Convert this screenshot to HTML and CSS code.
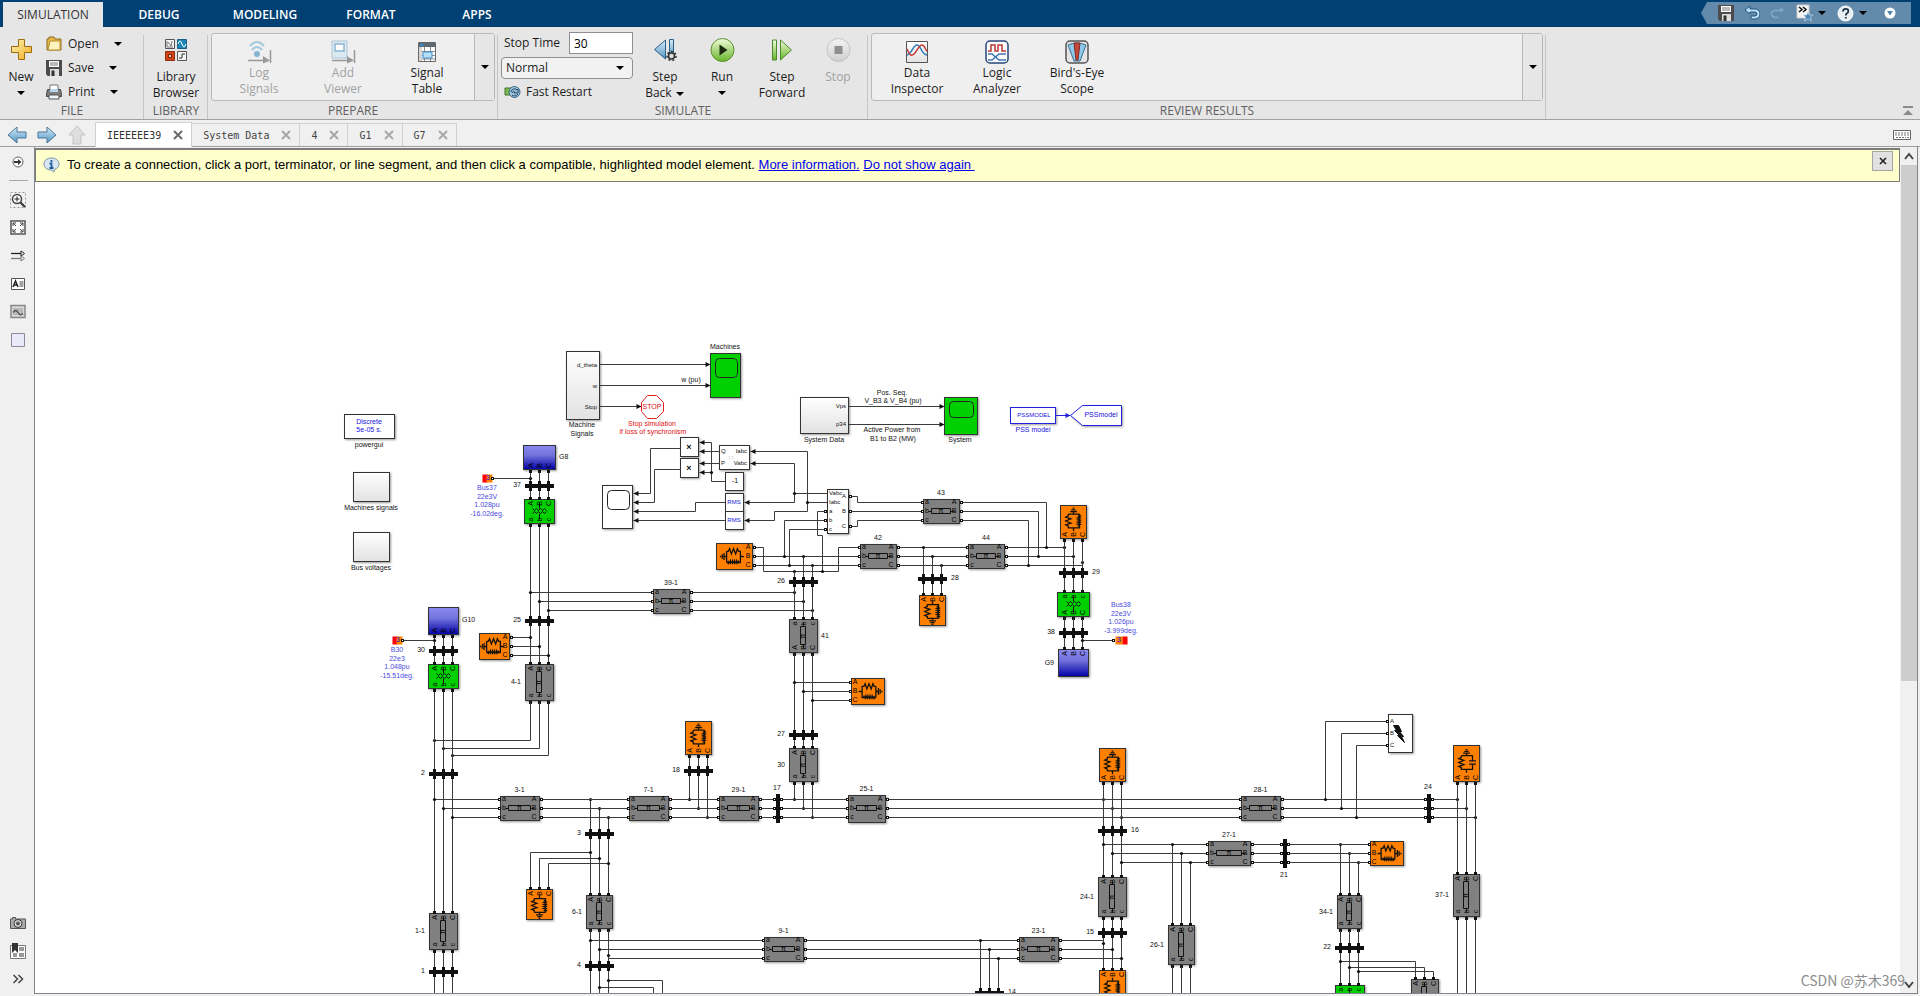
FILE: index.html
```html
<!DOCTYPE html>
<html lang="en">
<head>
<meta charset="utf-8">
<title>IEEEEEE39 - Simulink</title>
<link rel="stylesheet" href="styles.css">
</head>
<body>
<svg class="defs" aria-hidden="true">
  <defs>
    <linearGradient id="gold" x1="0" y1="0" x2="1" y2="1"><stop offset="0" stop-color="#fff6b8"/><stop offset="1" stop-color="#efa91c"/></linearGradient>
    <linearGradient id="sky" x1="0" y1="0" x2="0" y2="1"><stop offset="0" stop-color="#d8ecf8"/><stop offset="1" stop-color="#4f94c4"/></linearGradient>
    <linearGradient id="leaf" x1="0" y1="0" x2="0" y2="1"><stop offset="0" stop-color="#effbd9"/><stop offset="1" stop-color="#69b52a"/></linearGradient>
    <linearGradient id="mist" x1="0" y1="0" x2="0" y2="1"><stop offset="0" stop-color="#f4f4f4"/><stop offset="1" stop-color="#cfcfcf"/></linearGradient>
    <linearGradient id="gen" x1="0" y1="0" x2="0" y2="1"><stop offset="0" stop-color="#8888ee"/><stop offset="0.4" stop-color="#7373dc"/><stop offset="1" stop-color="#0000a8"/></linearGradient>
    <linearGradient id="sub" x1="0" y1="0" x2="0" y2="1"><stop offset="0" stop-color="#ffffff"/><stop offset="1" stop-color="#e2e2e2"/></linearGradient>
    <symbol id="caret" viewBox="0 0 10 6"><path d="M1 1h8L5 5z"/></symbol>
    <symbol id="cross" viewBox="0 0 10 10"><path d="M1 1l8 8M9 1l-8 8" fill="none" stroke="currentColor" stroke-width="2"/></symbol>
    <symbol id="disk" viewBox="0 0 16 16"><path d="M0 0h16v16H1.500L0 14z" fill="#4c4c4c"/><path d="M3 1h10v6H3z" fill="#fff"/><path d="M4 3h8M4 5h8" stroke="#777"/><path d="M4 9h9v7H4z" fill="#ddd"/><path d="M5.500 10.500h3V16h-3z" fill="#333"/></symbol>
  </defs>
</svg>

<header class="titlebar">
  <nav class="ribbon-tabs">
    <button class="ribbon-tab active">SIMULATION</button>
    <button class="ribbon-tab debug">DEBUG</button>
    <button class="ribbon-tab modeling">MODELING</button>
    <button class="ribbon-tab format">FORMAT</button>
    <button class="ribbon-tab apps">APPS</button>
  </nav>
  <div class="quick">
    <button class="quick-btn" aria-label="Save"><svg width="16" height="16"><use href="#disk"/></svg></button>
    <button class="quick-btn" aria-label="Undo"><svg width="16" height="16"><path d="M1 5l5-4v3h5a4 4 0 0 1 0 10H7v-3h4a1.500 1.500 0 0 0 0-4H6v2z" fill="#bfe0f5" stroke="#1f5580"/></svg></button>
    <button class="quick-btn" aria-label="Redo"><svg width="16" height="16"><path d="M15 5l-5-4v3H5a4 4 0 0 0 0 10h4v-3H5a1.500 1.500 0 0 1 0-4h5v2z" fill="#7fa4c2" stroke="#5e86a8"/></svg></button>
    <button class="quick-btn wide" aria-label="Favorites"><svg width="17" height="18"><path d="M1 1h12v13H1z" fill="#f4f4f4" stroke="#ccc"/><path d="M3 3l3 2.500L3 8M7 3l3 2.500L7 8" fill="none" stroke="#111" stroke-width="1.500"/><path d="M12 8l1.300 3H17l-2.600 2 1 4-3.400-2.200L8.600 17l1-4L7 11h3.700z" fill="#4b86b8" stroke="#d7e7f3" stroke-width="0.600"/></svg><svg width="10" height="6"><use href="#caret"/></svg></button>
    <button class="quick-btn wide" aria-label="Help"><svg width="17" height="17"><circle cx="8.500" cy="8.500" r="7.500" fill="#e9eef2" stroke="#fff"/><path d="M6 6.500q0-2.700 2.700-2.700T11.300 6.300q0 1.500-1.500 2.200-1 .5-1 2M8.800 12v1.600" fill="none" stroke="#1b2f45" stroke-width="1.800"/></svg><svg width="10" height="6"><use href="#caret"/></svg></button>
    <button class="quick-btn last" aria-label="More"><svg width="12" height="12"><circle cx="6" cy="6" r="5.500" fill="#fff"/><path d="M3 4h6L6 8.500z" fill="#4f83ad"/></svg></button>
  </div>
</header>

<section class="ribbon">
  <div class="group file">
    <div class="group-body">
      <button class="big new"><svg width="24" height="24"><path d="M9.500 1.500h6v7h7v6h-7v7h-6v-7h-7v-6h7z" fill="url(#gold)" stroke="#9c6c0c"/></svg><span>New</span><svg class="under" width="10" height="6"><use href="#caret"/></svg></button>
      <div class="stack">
        <button class="row"><svg width="16" height="16"><path d="M1 3h2V1h5l1 2h6v11H1z" fill="#e5b94a" stroke="#8d6a1c"/><path d="M4 5h10v9H2z" fill="#fff3bd" stroke="#b88f30"/></svg><span>Open</span><svg width="10" height="6"><use href="#caret"/></svg></button>
        <button class="row"><svg width="16" height="16"><use href="#disk"/></svg><span>Save</span><svg width="10" height="6"><use href="#caret"/></svg></button>
        <button class="row"><svg width="16" height="16"><path d="M4 1h8v6H4z" fill="#fff" stroke="#777"/><path d="M1.500 5.500h13q1 3 1 7h-15q0-4 1-7z" fill="#7d7d7d" stroke="#444"/><path d="M4 5h8v3H4z" fill="#b5d7ee"/><path d="M3 11h10v4H3z" fill="#eef6fc" stroke="#555"/></svg><span>Print</span><svg width="10" height="6"><use href="#caret"/></svg></button>
      </div>
    </div>
    <h2>FILE</h2>
  </div>
  <div class="group library">
    <div class="group-body">
      <button class="big"><svg width="24" height="24"><path d="M1.500 1.500h9v9h-9z" fill="#f4f4f4" stroke="#555"/><path d="M3 3v6h6M4 4l3 4 1-5" fill="none" stroke="#777"/><path d="M13.500 1.500h9v9h-9z" fill="#1e86b8" stroke="#146088"/><path d="M14 6q2-6 4 0t4 0" fill="none" stroke="#fff"/><path d="M1.500 13.500h9v9h-9z" fill="#d2431a" stroke="#8e2c0e"/><path d="M4.500 16.500h3v3h-3z" fill="#f7c9b5" stroke="#7c2306"/><path d="M13.500 13.500h9v9h-9z" fill="#f4f4f4" stroke="#555"/><path d="M15 20h3v-4h3" fill="none" stroke="#333"/></svg><span>Library<br>Browser</span></button>
    </div>
    <h2>LIBRARY</h2>
  </div>
  <div class="group prepare">
    <div class="group-body">
      <div class="gallery">
        <button class="item" disabled><svg width="26" height="24"><path d="M4 6q7-8 14 0M6 10q5-6 10 0" fill="none" stroke="#a5c8dd" stroke-width="2"/><circle cx="11" cy="14" r="3" fill="#86b3d0"/><path d="M2 20.500h18M24.500 10v13" stroke="#999" stroke-width="1.500"/><path d="M17 16l7 4.500-7 3z" fill="#999"/></svg><span>Log<br>Signals</span></button>
        <button class="item" disabled><svg width="26" height="24"><path d="M2 1h15v17H2z" fill="#dbe9f1" stroke="#a9c5d6"/><path d="M5 4h9v7H5z" fill="#fff" stroke="#8db5cf" stroke-width="1.500"/><path d="M2 20.500h18M24.500 10v13" stroke="#999" stroke-width="1.500"/><path d="M17 16l7 4.500-7 3z" fill="#999"/></svg><span>Add<br>Viewer</span></button>
        <button class="item"><svg width="24" height="24"><path d="M3.500 2.500h17v19h-17z" fill="#fff" stroke="#666"/><path d="M4 3h16v4H4z" fill="#5c6a75"/><path d="M3.500 11.500h17M3.500 15.500h17M3.500 19h17M9.500 7v14M15.500 7v14" stroke="#8a8a8a"/><path d="M4 7h3v14H4z" fill="#d5d5d5"/><path d="M8 12h9v6H8z" fill="#b9defa" stroke="#3f8fd0"/><path d="M5 4h3v2H5z" fill="#2a8fe0"/></svg><span>Signal<br>Table</span></button>
        <button class="more" aria-label="More prepare tools"><svg width="10" height="6"><use href="#caret"/></svg></button>
      </div>
    </div>
    <h2>PREPARE</h2>
  </div>
  <div class="group simulate">
    <div class="group-body">
      <div class="sim-fields">
        <div class="stop-time"><label for="stop">Stop Time</label><input id="stop" type="text" value="30"></div>
        <div class="mode"><select aria-label="Simulation mode"><option>Normal</option></select><svg width="10" height="6"><use href="#caret"/></svg></div>
        <button class="fast"><svg width="17" height="14"><path d="M1 3h6v7H1z" fill="#7cb94a" stroke="#40702a"/><circle cx="10.500" cy="7" r="5.500" fill="#9cc3dd" stroke="#3c6888"/><path d="M7 7a3.500 3.500 0 0 1 6-2l1-1v4h-4l1-1a2 2 0 0 0-3 1M14 9a4 4 0 0 1-6 1" fill="none" stroke="#1f4965"/></svg><span>Fast Restart</span></button>
      </div>
      <button class="big back"><svg width="24" height="24"><path d="M12.500 2v19L1.500 11.500z" fill="url(#sky)" stroke="#2c5f88"/><path d="M16.500 1.500h4v18h-4z" fill="url(#sky)" stroke="#2c5f88"/><circle cx="18.500" cy="18" r="3" fill="#ddd" stroke="#333" stroke-width="1.500"/><circle cx="18.500" cy="18" r="4.500" fill="none" stroke="#333" stroke-width="1.500" stroke-dasharray="2 2"/></svg><span>Step<br>Back <svg width="10" height="6"><use href="#caret"/></svg></span></button>
      <button class="big run"><svg width="25" height="24"><circle cx="12.500" cy="12" r="11.500" fill="url(#leaf)" stroke="#5f8f30"/><path d="M9.500 6.500v11l8-5.500z" fill="#1c2a12"/></svg><span>Run</span><svg class="under" width="10" height="6"><use href="#caret"/></svg></button>
      <button class="big fwd"><svg width="24" height="24"><path d="M2.500 2h4v20h-4z" fill="url(#leaf)" stroke="#4b8a2c"/><path d="M10.500 2v20l11-10z" fill="url(#leaf)" stroke="#4b8a2c"/></svg><span>Step<br>Forward</span></button>
      <button class="big stop" disabled><svg width="25" height="24"><circle cx="12.500" cy="12" r="11.500" fill="url(#mist)" stroke="#c2c2c2"/><path d="M8.500 8h8v8h-8z" fill="#8f8f8f"/></svg><span>Stop</span></button>
    </div>
    <h2>SIMULATE</h2>
  </div>
  <div class="group review">
    <div class="group-body">
      <div class="gallery">
        <button class="item"><svg width="24" height="24"><path d="M1.500 1.500h21v21h-21z" fill="url(#sub)" stroke="#555"/><path d="M2 15C7 14 8 5 12 5s4 9 10 10" fill="none" stroke="#2f7fc0" stroke-width="1.500"/><path d="M2 9c2 5 4 8 7 5s5-9 8-9 3 5 5 6" fill="none" stroke="#c73a33" stroke-width="1.500"/></svg><span>Data<br>Inspector</span></button>
        <button class="item"><svg width="24" height="24"><rect x="1" y="1" width="22" height="22" rx="4" fill="#fff" stroke="#28457c" stroke-width="1.500"/><path d="M3 11h3V5h4v6h3V5h4v6h4" fill="none" stroke="#b93a33" stroke-width="1.500"/><path d="M3 14h4l7 6h7M3 20h4l7-6h7" fill="none" stroke="#3e77b8" stroke-width="1.500"/></svg><span>Logic<br>Analyzer</span></button>
        <button class="item"><svg width="24" height="24"><rect x="1" y="1" width="22" height="22" rx="4" fill="#e4e4e4" stroke="#555" stroke-width="1.500"/><path d="M3 5q9-4 18 0l-6 16H9z" fill="#8ec9ea" stroke="#3a6d8e"/><path d="M9 3h6l-2 17h-2z" fill="#c7473a" stroke="#7e2a22"/></svg><span>Bird's-Eye<br>Scope</span></button>
        <button class="more" aria-label="More review tools"><svg width="10" height="6"><use href="#caret"/></svg></button>
      </div>
    </div>
    <h2>REVIEW RESULTS</h2>
  </div>
  <button class="collapse" aria-label="Collapse toolstrip"><svg width="12" height="12"><path d="M1 1h10v2H1zM6 5l5 5H1z" fill="#8a8a8a"/></svg></button>
</section>

<nav class="docbar">
  <button class="nav-btn" aria-label="Back"><svg width="20" height="18"><path d="M1 9l9-8v5h9v6h-9v5z" fill="url(#sky)" stroke="#4a7696"/></svg></button>
  <button class="nav-btn" aria-label="Forward"><svg width="20" height="18"><path d="M19 9l-9-8v5H1v6h9v5z" fill="url(#sky)" stroke="#4a7696"/></svg></button>
  <button class="nav-btn up" aria-label="Up"><svg width="18" height="20"><path d="M9 1l8 9h-4v9H5v-9H1z" fill="#dedede" stroke="#c4c4c4"/></svg></button>
  <div class="doctabs">
    <button class="doctab current"><span>IEEEEEE39</span><svg width="10" height="10"><use href="#cross"/></svg></button>
    <button class="doctab"><span>System Data</span><svg width="10" height="10"><use href="#cross"/></svg></button>
    <button class="doctab"><span>4</span><svg width="10" height="10"><use href="#cross"/></svg></button>
    <button class="doctab"><span>G1</span><svg width="10" height="10"><use href="#cross"/></svg></button>
    <button class="doctab"><span>G7</span><svg width="10" height="10"><use href="#cross"/></svg></button>
  </div>
  <button class="keyboard" aria-label="Keyboard shortcuts"><svg width="18" height="10"><path d="M0.500 0.500h17v9h-17z" fill="#fff" stroke="#666"/><path d="M2 3h14M2 5h14M3 7.500h2M6 7.500h7M14 7.500h2" stroke="#777" stroke-dasharray="2 1"/></svg></button>
</nav>

<main class="workspace">
  <aside class="palette">
    <button aria-label="Hide browser"><svg width="16" height="16"><circle cx="8" cy="8" r="5" fill="#fff" stroke="#666"/><path d="M4 7h4V5l3.500 3L8 11V9H4z" fill="#333"/></svg></button>
    <hr>
    <button aria-label="Zoom"><svg width="16" height="16"><path d="M.5.500h15v15H.5z" fill="none" stroke="#999" stroke-dasharray="2 2"/><circle cx="7" cy="7" r="4.500" fill="#fff" stroke="#444" stroke-width="1.500"/><path d="M4.500 7h5M7 4.500v5" stroke="#222"/><path d="M10.500 10.500l4.500 4.500" stroke="#333" stroke-width="2"/></svg></button>
    <button aria-label="Fit to view"><svg width="16" height="16"><path d="M1 1h14v13H1z" fill="#fff" stroke="#555" stroke-width="1.500"/><path d="M3 6V3h3M10 3h3v3M3 9v3h3M13 9v3h-3M3 3l3 3M13 3l-3 3M3 12l3-3M13 12l-3-3" fill="none" stroke="#444"/></svg></button>
    <button aria-label="Signals"><svg width="16" height="16"><path d="M1 5.500h12" stroke="#222" stroke-width="1.300"/><path d="M11 3l3.500 2.500L11 8z" fill="#fff" stroke="#222"/><path d="M1 10.500h12" stroke="#777" stroke-width="1.300"/><path d="M11 8l3.500 2.500L11 13z" fill="#fff" stroke="#777"/></svg></button>
    <button aria-label="Annotation"><svg width="16" height="16"><path d="M1.500 2.500h13v11h-13z" fill="#fff" stroke="#555"/><path d="M3 11l2.500-6L8 11M4 9h3" fill="none" stroke="#222" stroke-width="1.500"/><path d="M9.500 6h4M9.500 8h4M9.500 10h4" stroke="#444"/></svg></button>
    <button aria-label="Image"><svg width="16" height="16"><path d="M1 1.500h14v12H1z" fill="#d9d9d9" stroke="#888" stroke-width="1.500"/><path d="M3 4h10v7H3z" fill="#b8b8b8"/><path d="M3 8.500q3-4 5 0t5 1" fill="none" stroke="#555" stroke-width="1.300"/></svg></button>
    <button aria-label="Area"><svg width="16" height="16"><path d="M1.500 1.500h13v13h-13z" fill="#e9e9f8" stroke="#8a8a99"/></svg></button>
    <span class="spring"></span>
    <button aria-label="Screenshot"><svg width="16" height="16"><path d="M.5 4h2V2.500h3V4h10v9.500H.5z" fill="#aaa" stroke="#555"/><circle cx="8" cy="8.500" r="4" fill="#ddd" stroke="#333"/><circle cx="8" cy="8.500" r="2" fill="#555"/></svg></button>
    <button aria-label="Model browser"><svg width="16" height="16"><path d="M.5 2.500h15v13H.5z" fill="#fff" stroke="#777"/><path d="M9 4h5v4H9zM3 10h4v4H3zM9 10h5v4H9z" fill="#999"/><path d="M2 0h6v10L5 7l-3 3z" fill="#333"/></svg></button>
    <button aria-label="More tools"><svg width="16" height="16"><path d="M3.500 4l4 4-4 4M8.500 4l4 4-4 4" fill="none" stroke="#444" stroke-width="1.500"/></svg></button>
  </aside>
  <div class="editor">
    <div class="notice">
      <svg width="18" height="16"><path d="M8.500 1C4 1 1 3.500 1 7s3 6 7 6l3 2 .5-2.500C14.500 11.500 16 9.500 16 7c0-3.500-3-6-7.500-6z" fill="#d7e6f0" stroke="#7d94a5"/><path d="M8.500 3v2M6.500 6.500h2V11M6.500 11h4" fill="none" stroke="#1e5c9a" stroke-width="1.800"/></svg>
      <p>To create a connection, click a port, terminator, or line segment, and then click a compatible, highlighted model element. <a href="#info">More information.</a> <a href="#hide">Do not show again&nbsp;</a></p>
      <button class="dismiss" aria-label="Dismiss"><svg width="8" height="8"><path d="M1 1l6 6M7 1L1 7" stroke="#222" stroke-width="1.600"/></svg></button>
    </div>
    <svg class="canvas" id="model" role="img" aria-label="Block diagram"></svg>
  </div>
  <div class="scrollbar">
    <svg width="16" height="18"><path d="M4 12l4-5 4 5" fill="none" stroke="#444" stroke-width="2"/></svg>
    <div class="thumb"></div>
    <svg class="down" width="16" height="17"><path d="M4 6l4 5 4-5" fill="none" stroke="#444" stroke-width="2"/></svg>
  </div>
</main>
<div class="watermark">CSDN @苏木369</div>
<script src="diagram.js"></script>
</body>
</html>
```

FILE: styles.css
```css
* { box-sizing: border-box; }
html, body { height: 100%; }
body {
  margin: 0;
  display: flex;
  flex-direction: column;
  background: #f0f0f0;
  color: #1c1c1c;
  font: 12px/16px "Open Sans", "Noto Sans", sans-serif;
  overflow: hidden;
}
button {
  padding: 0;
  border: 0;
  background: none;
  color: inherit;
  font: inherit;
}
svg { display: block; flex: none; }
.defs { position: absolute; width: 0; height: 0; }

.titlebar {
  display: flex;
  justify-content: space-between;
  height: 27px;
  padding-left: 3px;
  background: #004073;
}
.ribbon-tabs { display: flex; padding-top: 2px; }
.ribbon-tab { color: #fff; font-weight: 600; }
.ribbon-tab.active { width: 100px; background: #e6e6e6; color: #333; font-weight: 400; }
.ribbon-tab.debug { width: 112px; }
.ribbon-tab.modeling { width: 100px; }
.ribbon-tab.format { width: 112px; }
.ribbon-tab.apps { width: 100px; }
.quick {
  display: flex;
  align-items: center;
  gap: 10px;
  width: 210px;
  height: 22px;
  margin: 2px 9px 0 0;
  padding-left: 17px;
  background: #6389ab;
  clip-path: polygon(6px 0, 100% 0, 100% 100%, 6px 100%, 0 50%);
}
.quick-btn.wide { display: flex; align-items: center; gap: 4px; }
.quick-btn.last { margin-left: 6px; }

.ribbon {
  display: flex;
  background: #e6e6e6;
  border-bottom: 1px solid #a0a0a0;
}
.group {
  position: relative;
  display: flex;
  flex-direction: column;
  padding-top: 5px;
}
.group::after {
  content: "";
  position: absolute;
  top: 8px;
  right: 0;
  bottom: 0;
  border-right: 1px solid #c6c6c6;
}
.group h2 {
  margin: 0;
  padding-top: 2px;
  color: #606060;
  font-size: 12px;
  font-weight: 400;
  line-height: 16px;
  text-align: center;
}
.group-body { display: flex; height: 69px; }
.file { width: 144px; }
.library { width: 64px; }
.library .big { flex: 1; }
.prepare { width: 290px; }
.simulate { width: 370px; }
.review { flex: 0 1 678px; }

.big {
  display: flex;
  flex-direction: column;
  align-items: center;
  padding-top: 6px;
}
.big > span { margin-top: 7px; }
.big span svg { display: inline-block; vertical-align: middle; }
.under { margin-top: 5px; }
.new { width: 42px; }
.stack { padding-left: 4px; }
.row { display: flex; align-items: center; height: 24px; }
.row span { margin: 0 14px 0 6px; }
button:disabled { color: #a2a2a2; }

.gallery {
  display: flex;
  flex: 1;
  margin: 1px 3px 0;
  border: 1px solid #b9b9b9;
  border-radius: 3px;
  background: #efefef;
}
.item {
  display: flex;
  flex-direction: column;
  align-items: center;
  gap: 1px;
  width: 84px;
  padding-top: 6px;
}
.prepare .item:first-child { margin-left: 5px; }
.review .item { width: 80px; }
.review .item:first-child { margin-left: 5px; }
.more {
  display: flex;
  align-items: center;
  justify-content: center;
  width: 20px;
  margin-left: auto;
  border-left: 1px solid #b9b9b9;
  background: #e6e6e6;
}

.sim-fields {
  display: flex;
  flex-direction: column;
  gap: 3px;
  width: 132px;
  margin: 0 5px 0 3px;
}
.stop-time { display: flex; align-items: center; justify-content: space-between; padding-left: 3px; }
.stop-time input {
  width: 64px;
  height: 22px;
  border: 1px solid #8f8f8f;
  padding: 0 4px;
  font: inherit;
  background: #fff;
}
.mode { position: relative; }
.mode select {
  appearance: none;
  display: block;
  width: 100%;
  height: 22px;
  padding: 0 4px;
  border: 1px solid #8f8f8f;
  border-radius: 4px;
  background: #f2f2f2;
  font: inherit;
  color: inherit;
}
.mode svg { position: absolute; right: 8px; top: 8px; pointer-events: none; }
.fast { display: flex; align-items: center; gap: 5px; height: 21px; padding-left: 3px; }
.back { width: 54px; }
.run { width: 60px; }
.fwd { width: 60px; }
.stop { width: 52px; }
.collapse { margin: auto 6px 2px auto; }

.docbar {
  display: flex;
  align-items: center;
  gap: 10px;
  height: 27px;
  padding: 3px 9px 0 7px;
  border-bottom: 1px solid #a0a0a0;
}
.nav-btn { width: 20px; display: flex; justify-content: center; }
.doctabs { display: flex; align-items: flex-end; align-self: stretch; margin: -1px 0 -1px -2px; }
.doctab {
  display: flex;
  align-items: center;
  gap: 12px;
  height: 23px;
  margin-bottom: 1px;
  padding: 0 8px 0 11px;
  border: 1px solid #d0d0d0;
  border-left: 0;
  border-bottom: 0;
  font: 10px/16px "DejaVu Sans Mono", monospace;
  color: #444;
}
.doctab span { padding-top: 2px; }
.doctab svg { color: #a8a8a8; }
.doctab.current {
  height: 25px;
  margin: 0;
  background: #fff;
  border-left: 1px solid #d0d0d0;
  color: #333;
}
.doctab.current svg { color: #6a6a6a; }
.keyboard { margin-left: auto; }

.workspace {
  flex: 1;
  min-height: 0;
  display: flex;
  padding: 0 2px 2px 0;
}
.palette {
  display: flex;
  flex-direction: column;
  align-items: center;
  gap: 12px;
  width: 34px;
  padding: 7px 0 7px 2px;
}
.palette hr { width: 19px; margin: -2px 0 -1px; border: 0; border-top: 1px solid #a8a8a8; }
.spring { flex: 1; }
.editor {
  flex: 1;
  min-width: 0;
  display: flex;
  flex-direction: column;
  padding-top: 1px;
  border-left: 1px solid #80868f;
  border-bottom: 1px solid #80868f;
}
.notice {
  display: flex;
  align-items: center;
  gap: 6px;
  height: 34px;
  padding: 0 6px 1px 7px;
  border: 1px solid #7b7b7b;
  border-top-width: 2px;
  background: #ffffcc;
  font: 13px/16px "Liberation Sans", Arial, sans-serif;
}
.notice p { margin: 0; color: #000; }
.notice a { color: #0000ee; }
.dismiss {
  display: flex;
  align-items: center;
  justify-content: center;
  align-self: flex-start;
  width: 21px;
  height: 20px;
  margin: 1px 0 0 auto;
  border: 1px solid #a5a5a5;
  background: #e1e1e1;
}
.canvas { flex: 1; min-height: 0; width: 100%; background: #fff; overflow: hidden; }
.scrollbar {
  display: flex;
  flex-direction: column;
  width: 18px;
  padding-left: 1px;
  border-right: 1px solid #80868f;
  border-bottom: 1px solid #80868f;
}
.thumb { height: 61%; background: #cdcdcd; }
.scrollbar .down { margin-top: auto; }
.watermark {
  position: absolute;
  right: 15px;
  bottom: 6px;
  color: #8c8c8c;
  font: 14px/20px "Noto Sans CJK SC", sans-serif;
}

.canvas text { font: 7px "Liberation Sans", Arial, sans-serif; fill: #111; }
.canvas .port-name { font-size: 6px; fill: #111; }
.canvas .pin { font-size: 7px; fill: #000; }
.canvas .blue { fill: #1414dd; }
.canvas .bus-info { fill: #4a4ae0; }
.canvas .red { fill: #e01010; }
.canvas .times { font-size: 9px; font-weight: 700; }
.wire { fill: none; stroke: #3c3c3c; stroke-width: 1; }
.wire.blue { fill: none; stroke: #2222dd; }
.box { stroke: #333; stroke-width: 1; filter: drop-shadow(1px 1px 1px #0006); }
.glyph { fill: none; stroke: #111; stroke-width: 1; }
.glyph.strong { stroke-width: 1.5; }
.knob { fill: #fff; stroke: #111; stroke-width: 1; }
.dot, .bar, .tip { fill: #111; }
.tip.blue { fill: #2222dd; }
```

FILE: diagram.js
```js
(function () {
  var NS = "http://www.w3.org/2000/svg";
  var root = document.getElementById("model");
  var P = 9; // spacing between the three phases

  function el(name, attrs, parent) {
    var e = document.createElementNS(NS, name);
    for (var k in attrs) e.setAttribute(k, attrs[k]);
    (parent || layer).appendChild(e);
    return e;
  }
  var layer = el("g", { transform: "translate(-34.5 -181.5)" }, root);

  function text(x, y, s, anchor, cls, rot) {
    var a = { x: rot ? x : x - 0.5, y: rot ? y + 2 : y + 1.5, "text-anchor": anchor || "middle" };
    if (cls) a["class"] = cls;
    if (rot) a.transform = "rotate(-90 " + x + " " + y + ")";
    el("text", a).textContent = s;
  }
  function wire(pts, cls) {
    el("polyline", { points: pts, "class": "wire " + (cls || "") });
  }
  function arrow(pts, cls) {
    wire(pts, cls);
    var n = pts.split(" "), x = +n[n.length - 2], y = +n[n.length - 1];
    var d = x > +n[n.length - 4] ? -5 : 5;
    el("path", { d: "M" + x + " " + y + "l" + d + " -2.500v5z", "class": "tip " + (cls || "") });
  }
  function dots() {
    for (var i = 0; i < arguments.length; i += 2)
      el("circle", { cx: arguments[i], cy: arguments[i + 1], r: 1.6, "class": "dot" });
  }
  function box(x, y, w, h, fill, extra) {
    var a = { x: x, y: y, width: w, height: h, fill: fill, "class": "box" };
    for (var k in extra) a[k] = extra[k];
    el("rect", a);
  }
  function knob(x, y) { el("rect", { x: x - 1, y: y - 1, width: 2, height: 2, "class": "knob" }); }
  function knobsV(x, y) { for (var i = 0; i < 3; i++) el("rect", { x: x + i * P - 1.5, y: y - 1.5, width: 3, height: 3, "class": "bar" }); }
  function knobsH(x, y) { for (var i = 0; i < 3; i++) knob(x, y + i * P); }
  function cols(x, y1, y2) { for (var i = 0; i < 3; i++) wire((x + i * P) + " " + y1 + " " + (x + i * P) + " " + y2); }
  function rows(x1, x2, y) { for (var i = 0; i < 3; i++) wire(x1 + " " + (y + i * P) + " " + x2 + " " + (y + i * P)); }
  function pinsV(x, y, s) { for (var i = 0; i < 3; i++) text(x + i * P, y, s[i], "middle", "pin", true); }
  function pinsH(x, y, s) { for (var i = 0; i < 3; i++) text(x, y + i * P, s[i], "middle", "pin"); }

  // Bus bar across three vertical phases
  function bus(x, y, label, side) {
    el("rect", { x: x - 5.5, y: y - 1.5, width: 29, height: 4, "class": "bar" });
    knobsV(x, y - 3); knobsV(x, y + 4);
    if (side === "r") text(x + 28, y, label, "start");
    else text(x - 9, y, label, "end");
  }
  function busV(x, y, label, ly) {
    el("rect", { x: x - 1.5, y: y - 5.5, width: 4, height: 29, "class": "bar" });
    knobsH(x - 3, y); knobsH(x + 4, y);
    text(x, ly, label);
  }
  // Pi line sections
  function lineH(x, y, w, h, py, label) {
    box(x, y, w, h, "#808080");
    knobsH(x - 1, py); knobsH(x + w + 2, py);
    pinsH(x + 4, py, "abc"); pinsH(x + w - 5, py, "ABC");
    el("path", { d: "M" + (x + 5) + " " + (py + P) + "h3M" + (x + w - 9) + " " + (py + P) + "h4M" + (x + 8) + " " + (py + 6) + "h" + (w - 17) + "v5h-" + (w - 17) + "z", "class": "glyph" });
    text(x + w / 2, py + 9, "π", "middle", "pin");
    text(x + w / 2, y - 6, label);
  }
  function lineV(x, y, w, h, px, label, top, side) {
    box(x, y, w, h, "#808080");
    knobsV(px, y - 1); knobsV(px, y + h + 2);
    pinsV(px, y + 4, top); pinsV(px, y + h - 5, top === "ABC" ? "abc" : "ABC");
    el("path", { d: "M" + (px + 9) + " " + (y + 3) + "v4M" + (px + 9) + " " + (y + h - 8) + "v4M" + (px + 6) + " " + (y + 7) + "h5v" + (h - 15) + "h-5z", "class": "glyph" });
    text(px + 8, y + h / 2, "π", "middle", "pin", true);
    if (side === "r") text(x + w + 4, y + h / 2, label, "start");
    else text(x - 4, y + h / 2, label, "end");
  }
  // Three-phase load; the glyph is drawn pointing left and turned as needed
  function load(x, y, w, h, dir, p, cap) {
    box(x, y, w, h, "#ff8000");
    var cx = x + w / 2, cy = y + h / 2;
    var turn = {
      left: "scale(.86)",
      right: "scale(-.86 .86)",
      up: "rotate(90) scale(.86 -.86)",
      down: "rotate(-90) scale(.86)"
    }[dir];
    var low = cap ? "M-8 7h6M-2 3v8M2 3v8M2 7h6" : "M-8 7h2V5q1 4 2.400 0q1 4 2.400 0q1 4 2.400 0q1 4 2.400 0q1 4 2.400 0v2h-4M-6 5v4M-3.600 5v4M-1 5v4M1.400 5v4M4 5v4";
    el("path", {
      d: "M-8-6h2l1.500-3 2 6 2.500-6 2.500 6 2-6 1.500 3H8V7H6M-8-6V7M8 0h4M-8 0h-3M-11-4v8M-13-2.500v5M-15-1v2" + low,
      transform: "translate(" + (dir === "left" ? cx - 1 : dir === "right" ? cx + 1 : cx) + " " + (dir === "up" ? cy - 1 : dir === "down" ? cy + 1 : cy) + ") " + turn,
      "class": "glyph strong"
    });
    if (dir === "left") { knobsH(x + w + 2, p); pinsH(x + w - 4, p, "ABC"); }
    if (dir === "right") { knobsH(x - 1, p); pinsH(x + 4, p, "ABC"); }
    if (dir === "up") { knobsV(p, y + h + 2); pinsV(p, y + h - 4, "ABC"); }
    if (dir === "down") { knobsV(p, y - 1); pinsV(p, y + 4, "ABC"); }
  }
  function transformer(x, y, w, px, top) {
    box(x, y, w, 24, "#00d000");
    knobsV(px, y - 1); knobsV(px, y + 26);
    pinsV(px, y + 4, top); pinsV(px, y + 20, top === "ABC" ? "abc" : "ABC");
    el("path", { d: "M" + (px + 9) + " " + (y + 3) + "v6M" + (px + 9) + " " + (y + 14) + "v6M" + (px + 2) + " " + (y + 9) + "l2 2 2-2 2 2 2-2 2 2 2-2 2 2M" + (px + 2) + " " + (y + 14) + "l2-2 2 2 2-2 2 2 2-2 2 2 2-2", "class": "glyph" });
  }
  function screen(x, y, w, h, fill) { el("rect", { x: x, y: y, width: w, height: h, rx: 4, fill: fill, stroke: "#222" }); }

  // Signal section
  box(344, 414, 50, 24, "#fff");
  text(369, 422, "Discrete", "middle", "blue"); text(369, 430, "5e-05 s.", "middle", "blue");
  text(369, 445, "powergui");
  box(353, 472, 36, 29, "url(#sub)"); text(371, 508, "Machines signals");
  box(353, 532, 36, 29, "url(#sub)"); text(371, 568, "Bus voltages");

  box(566, 351, 33, 68, "url(#sub)");
  text(597, 365, "d_theta", "end", "port-name"); text(597, 386, "w", "end", "port-name"); text(597, 407, "Stop", "end", "port-name");
  arrow("599 364 710 364"); arrow("599 385 710 385"); arrow("599 406 641 406");
  text(582, 425, "Machine"); text(582, 434, "Signals");
  text(691, 380, "w (pu)"); text(725, 347, "Machines");
  box(710, 353, 30, 44, "#00d000"); screen(715, 358, 22, 19, "none");
  el("path", { d: "M647 395h9l7 7v9l-7 7h-9l-6-7v-9z", fill: "#fff", stroke: "#e02020" });
  text(652, 407, "STOP", "middle", "red");
  text(652, 424, "Stop simulation", "middle", "red"); text(653, 432, "if loss of synchronism", "middle", "red");

  box(800, 397, 48, 36, "url(#sub)");
  text(846, 406, "Vps", "end", "port-name"); text(846, 424, "p34", "end", "port-name");
  text(824, 440, "System Data");
  arrow("848 406 944 406"); arrow("848 424 944 424");
  text(892, 393, "Pos. Seq."); text(893, 401, "V_B3 & V_B4 (pu)");
  text(892, 430, "Active Power from"); text(893, 439, "B1 to B2 (MW)");
  box(944, 397, 33, 37, "#00d000"); screen(949, 401, 24, 16, "none"); text(960, 440, "System");

  box(1010, 407, 45, 16, "#fff", { style: "stroke:#2222dd" });
  text(1034, 415, "PSSMODEL", "middle", "port-name blue");
  text(1033, 430, "PSS model", "middle", "blue");
  arrow("1055 415 1070 415", "blue");
  el("path", { d: "M1070 415l12-10h39v20h-39z", fill: "#fff", "class": "box", style: "stroke:#2222dd" });
  text(1101, 415, "PSSmodel", "middle", "blue");

  box(680, 437, 18, 19, "#fff"); text(689, 448, "×", "middle", "times"); box(680, 458, 18, 19, "#fff"); text(689, 469, "×", "middle", "times");
  box(719, 445, 30, 24, "#fff");
  text(721, 451, "Q", "start", "port-name"); text(721, 463, "P", "start", "port-name");
  text(747, 451, "Iabc", "end", "port-name"); text(747, 463, "Vabc", "end", "port-name"); text(731, 457, ":  :", "middle", "port-name");
  box(725, 472, 18, 18, "#fff"); text(735, 481, "-1");
  box(725, 493, 18, 18, "#fff"); text(734, 502, "RMS", "middle", "port-name blue");
  box(725, 511, 18, 18, "#fff"); text(734, 520, "RMS", "middle", "port-name blue");
  box(602, 485, 30, 43, "#fff"); screen(607, 490, 22, 19, "#fff");
  arrow("719 451 699 451"); arrow("719 463 699 463");
  arrow("725 481 711 481 711 442 699 442"); arrow("711 472 699 472");
  arrow("680 448 650 448 650 493 633 493"); arrow("680 469 654 469 654 502 633 502");
  arrow("725 502 695 502 695 511 633 511"); arrow("725 520 633 520");
  arrow("827 493 794 493 794 463 750 463"); arrow("794 493 794 502 744 502");
  arrow("827 502 807 502 807 451 750 451"); arrow("807 502 807 511 774 511 774 520 744 520");
  dots(711, 472, 794, 493, 807, 502);

  box(827, 489, 21, 44, "#fff");
  text(829, 493, "Vabc", "start", "port-name"); text(829, 502, "Iabc", "start", "port-name");
  ["a", "b", "c"].forEach(function (s, i) { text(829, 511 + i * P, s, "start", "port-name"); knob(825, 511 + i * P); });
  ["A", "B", "C"].forEach(function (s, i) { text(846, 496 + i * 15, s, "end", "port-name"); knob(850, 496 + i * 15); });
  wire("851 496 857 496 857 502 922 502"); wire("851 511 922 511"); wire("851 526 857 526 857 520 922 520");
  wire("824 511 817 511 817 535 822 535 822 571");
  wire("824 520 784 520 784 556"); wire("824 529 789 529 789 565");
  wire("755 547 763 547 763 571 838 571 838 547 859 547"); wire("755 556 859 556"); wire("755 565 859 565");
  dots(784, 556, 789, 565, 822, 571, 794, 571, 803, 556, 812, 565);
  wire("962 502 1046 502 1046 547"); wire("962 511 1038 511 1038 556"); wire("962 520 1028 520 1028 565");
  rows(899, 967, 547);
  wire("1007 547 1064 547"); wire("1007 556 1073 556"); wire("1007 565 1082 565");
  dots(1046, 547, 1038, 556, 1028, 565, 1064, 547, 1073, 556, 1082, 562, 923, 547, 932, 556, 941, 565);
  load(716, 543, 36, 26, "left", 547);
  lineH(923, 499, 36, 24, 502, "43");
  lineH(860, 544, 36, 24, 547, "42");
  lineH(968, 544, 36, 24, 547, "44");
  wire("923 547 923 595"); wire("932 556 932 595"); wire("941 565 941 595");
  bus(923, 578, "28", "r"); load(919, 595, 26, 30, "down", 923);

  cols(1064, 540, 592); load(1060, 505, 26, 33, "up", 1064); bus(1064, 572, "29", "r");
  transformer(1057, 592, 32, 1064, "abc"); cols(1064, 618, 649); bus(1064, 632, "38");
  box(1058, 649, 30, 27, "url(#gen)"); knobsV(1064, 648); pinsV(1064, 653, "ABC"); text(1054, 663, "G9", "end");
  wire("1082 640 1112 640"); dots(1082, 640); knob(1113, 640);

  function source(x, y, flip, lines, lx, ly) {
    el("rect", { x: x, y: y, width: flip ? 7 : 5, height: 8, fill: flip ? "#ff8000" : "#f00" });
    el("rect", { x: x + (flip ? 7 : 4), y: y, width: flip ? 5 : 6, height: 8, fill: flip ? "#f00" : "#ff8000" });
    text(flip ? x + 4 : x + 6, y + 4, "3", "middle", "blue");
    lines.forEach(function (s, i) { text(lx, ly + Math.round(i * 8.5), s, "middle", "bus-info"); });
  }
  source(1115, 636, true, ["Bus38", "22e3V", "1.026pu", "-3.999deg."], 1121, 605);
  source(482, 474, false, ["Bus37", "22e3V", "1.028pu", "-16.02deg."], 487, 488);
  source(392, 636, false, ["B30", "22e3", "1.048pu", "-15.51deg."], 397, 650);
  wire("493 478 530 478"); knob(492, 478);
  wire("403 640 434 640"); knob(402, 640);

  // G8 branch
  cols(530, 469, 499); cols(530, 524, 664); dots(530, 478);
  box(523, 445, 32, 24, "url(#gen)"); knobsV(530, 471); pinsV(530, 465, "ABC"); text(559, 457, "G8", "start");
  bus(530, 485, "37"); transformer(524, 499, 30, 530, "ABC");
  for (var i = 0; i < 3; i++) {
    wire((530 + i * P) + " " + (592 + i * P) + " 652 " + (592 + i * P));
    wire("692 " + (592 + i * P) + " " + (794 + i * P) + " " + (592 + i * P));
    wire("512 " + (637 + i * P) + " " + (530 + i * P) + " " + (637 + i * P));
    dots(530 + i * P, 592 + i * P, 794 + i * P, 592 + i * P, 530 + i * P, 637 + i * P);
  }
  lineH(653, 589, 36, 24, 592, "39-1");
  bus(530, 620, "25"); load(479, 633, 30, 26, "left", 637);
  lineV(525, 664, 28, 36, 530, "4-1", "ABC");
  wire("530 702 530 740 434 740"); wire("539 702 539 748 443 748"); wire("548 702 548 755 452 755");
  dots(434, 740, 443, 748, 452, 755);

  // G10 branch
  cols(434, 634, 664); cols(434, 689, 913); cols(434, 950, 993); dots(434, 640);
  box(428, 607, 30, 27, "url(#gen)"); knobsV(434, 636); pinsV(434, 630, "ABC"); text(462, 620, "G10", "start");
  bus(434, 650, "30"); transformer(428, 664, 30, 434, "ABC");
  bus(434, 773, "2"); lineV(429, 913, 28, 36, 434, "1-1", "ABC"); bus(434, 971, "1");

  // Middle row
  for (i = 0; i < 3; i++) {
    var y = 799 + i * P;
    wire((434 + i * P) + " " + y + " 499 " + y);
    wire("1431 " + y + " " + (1457 + i * P) + " " + y);
    wire((689 + i * P) + " 756 " + (689 + i * P) + " " + y);
    wire((794 + i * P) + " 783 " + (794 + i * P) + " " + y);
    wire((590 + i * P) + " " + y + " " + (590 + i * P) + " 895");
    dots(434 + i * P, y, 590 + i * P, y, 689 + i * P, y, 794 + i * P, y, 1103 + i * P, y, 1457 + i * P, y);
  }
  rows(542, 628, 799); rows(671, 718, 799); rows(760, 847, 799); rows(888, 1240, 799); rows(1283, 1426, 799);
  lineH(500, 796, 39, 24, 799, "3-1"); lineH(629, 796, 39, 24, 799, "7-1"); lineH(719, 796, 39, 24, 799, "29-1");
  busV(777, 799, "17", 788); lineH(848, 795, 37, 27, 799, "25-1"); lineH(1241, 796, 39, 24, 799, "28-1"); busV(1428, 799, "24", 787);
  load(685, 721, 26, 33, "up", 689); bus(689, 770, "18");

  // Column 26 - 27
  wire("794 571 794 619"); wire("803 556 803 619"); wire("812 565 812 619");
  bus(794, 581, "26"); lineV(789, 619, 28, 33, 794, "41", "abc", "r");
  cols(794, 654, 748);
  for (i = 0; i < 3; i++) { wire((794 + i * P) + " " + (682 + i * P) + " 850 " + (682 + i * P)); dots(794 + i * P, 682 + i * P); }
  load(851, 678, 33, 26, "right", 682);
  bus(794, 734, "27"); lineV(789, 748, 28, 33, 794, "30", "ABC");

  // Column 3 - 4
  bus(590, 833, "3");
  wire("590 852 530 852 530 888"); wire("599 858 539 858 539 888"); wire("608 863 548 863 548 888");
  dots(590, 852, 599, 858, 608, 863);
  load(526, 889, 26, 30, "down", 530);
  lineV(586, 895, 26, 33, 590, "6-1", "ABC"); cols(590, 930, 993);
  wire("590 940 763 940"); wire("599 949 763 949"); wire("608 958 763 958"); dots(590, 940, 599, 949, 608, 955);
  bus(590, 965, "4");
  wire("608 980 662 980 662 993"); wire("599 987 653 987 653 993"); dots(608, 980, 599, 987);
  rows(806, 1018, 940); wire("1061 940 1103 940"); wire("1061 949 1112 949"); wire("1061 958 1121 958");
  lineH(764, 937, 39, 24, 940, "9-1"); lineH(1019, 937, 39, 24, 940, "23-1");
  for (i = 0; i < 3; i++) { wire((980 + i * P) + " " + (940 + i * P) + " " + (980 + i * P) + " 993"); dots(980 + i * P, 940 + i * P); }
  bus(980, 992, "14", "r");

  // Column 16 - 15
  cols(1103, 783, 877); cols(1103, 918, 970);
  load(1099, 748, 26, 33, "up", 1103); bus(1103, 830, "16", "r");
  for (i = 0; i < 3; i++) {
    var yy = 844 + i * P;
    wire((1103 + i * P) + " " + yy + " 1207 " + yy);
    wire((1172 + i * P) + " " + yy + " " + (1172 + i * P) + " 925");
    wire((1340 + i * P) + " " + yy + " " + (1340 + i * P) + " 895");
    dots(1103 + i * P, yy, 1172 + i * P, yy, 1340 + i * P, yy);
  }
  lineV(1098, 877, 28, 39, 1103, "24-1", "ABC"); bus(1103, 932, "15");
  dots(1103, 943, 1112, 949, 1121, 958); load(1099, 970, 26, 33, "down", 1103);
  lineV(1168, 925, 26, 39, 1172, "26-1", "ABC"); cols(1172, 966, 993);
  lineH(1208, 841, 42, 24, 844, "27-1"); rows(1253, 1369, 844); busV(1284, 844, "21", 875);
  load(1370, 841, 33, 24, "right", 844);
  lineV(1337, 895, 24, 33, 1340, "34-1", "ABC"); cols(1340, 930, 985); bus(1340, 947, "22");
  wire("1340 961 1415 961 1415 979"); wire("1349 967 1424 967 1424 979"); wire("1358 971 1433 971 1433 979");
  dots(1340, 961, 1349, 967, 1358, 971);
  transformer(1335, 985, 29, 1340, "abc"); lineV(1411, 979, 27, 36, 1415, "", "ABC");

  // Fault and shunt column
  wire("1325 799 1325 721 1386 721"); wire("1341 808 1341 733 1386 733"); wire("1356 817 1356 745 1386 745");
  dots(1325, 799, 1341, 808, 1356, 817);
  box(1388, 714, 24, 38, "#fff");
  ["A", "B", "C"].forEach(function (s, k) { knob(1387, 721 + k * 12); text(1390, 721 + k * 12, s, "start", "port-name"); });
  el("path", { d: "M1393 725l5 0 3 6-2 0 4 5-2 0 3 6-7-7 2 0-5-5 2 0z", fill: "#111", stroke: "#111" });
  cols(1457, 783, 874); cols(1457, 918, 993);
  load(1453, 745, 26, 36, "up", 1457, true);
  lineV(1453, 874, 26, 42, 1457, "37-1", "ABC");
})();
```
